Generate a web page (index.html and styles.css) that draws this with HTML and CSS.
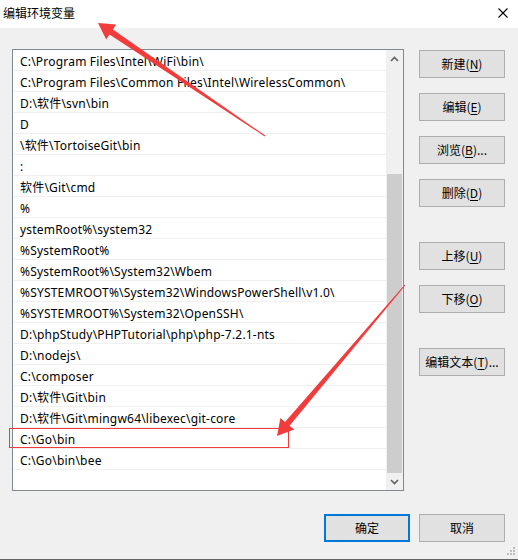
FILE: index.html
```html
<!DOCTYPE html>
<html>
<head>
<meta charset="utf-8">
<link rel="stylesheet" href="styles.css">
</head>
<body>
<div class="window">
  <div class="titlebar">
    <span class="title">编辑环境变量</span>
    <svg class="close" width="10" height="10" viewBox="0 0 10 10"><path d="M0.5 0.5 L9.5 9.5 M9.5 0.5 L0.5 9.5" stroke="#000" stroke-width="1.1" fill="none"/></svg>
  </div>
  <div class="content">
    <div class="top">
      <div class="listbox">
        <div class="rows">
          <div class="row">C:\Program Files\Intel\WiFi\bin\</div>
          <div class="row">C:\Program Files\Common Files\Intel\WirelessCommon\</div>
          <div class="row">D:\软件\svn\bin</div>
          <div class="row">D</div>
          <div class="row">\软件\TortoiseGit\bin</div>
          <div class="row">:</div>
          <div class="row">软件\Git\cmd</div>
          <div class="row">%</div>
          <div class="row">ystemRoot%\system32</div>
          <div class="row">%SystemRoot%</div>
          <div class="row">%SystemRoot%\System32\Wbem</div>
          <div class="row">%SYSTEMROOT%\System32\WindowsPowerShell\v1.0\</div>
          <div class="row">%SYSTEMROOT%\System32\OpenSSH\</div>
          <div class="row">D:\phpStudy\PHPTutorial\php\php-7.2.1-nts</div>
          <div class="row">D:\nodejs\</div>
          <div class="row">C:\composer</div>
          <div class="row">D:\软件\Git\bin</div>
          <div class="row">D:\软件\Git\mingw64\libexec\git-core</div>
          <div class="row">C:\Go\bin</div>
          <div class="row">C:\Go\bin\bee</div>
        </div>
        <div class="scrollbar">
          <div class="sb-btn"><svg width="9" height="6" viewBox="0 0 9 6"><path d="M1 5 L4.5 1.5 L8 5" stroke="#606060" stroke-width="1.6" fill="none"/></svg></div>
          <div class="track"><div class="thumb"></div></div>
          <div class="sb-btn"><svg width="9" height="6" viewBox="0 0 9 6"><path d="M1 1 L4.5 4.5 L8 1" stroke="#606060" stroke-width="1.6" fill="none"/></svg></div>
        </div>
      </div>
      <div class="side">
        <div class="btn">新建(<u>N</u>)</div>
        <div class="btn">编辑(<u>E</u>)</div>
        <div class="btn">浏览(<u>B</u>)...</div>
        <div class="btn">删除(<u>D</u>)</div>
        <div class="btn sep">上移(<u>U</u>)</div>
        <div class="btn">下移(<u>O</u>)</div>
        <div class="btn sep">编辑文本(<u>T</u>)...</div>
      </div>
    </div>
    <div class="bottom">
      <div class="btn default">确定</div>
      <div class="btn">取消</div>
    </div>
    <svg class="grip" width="9" height="9" viewBox="0 0 9 9">
      <rect x="6" y="0" width="2" height="2" fill="#bdbdbd"/>
      <rect x="3" y="3" width="2" height="2" fill="#bdbdbd"/>
      <rect x="6" y="3" width="2" height="2" fill="#bdbdbd"/>
      <rect x="0" y="6" width="2" height="2" fill="#bdbdbd"/>
      <rect x="3" y="6" width="2" height="2" fill="#bdbdbd"/>
      <rect x="6" y="6" width="2" height="2" fill="#bdbdbd"/>
    </svg>
  </div>
  <svg class="annot" width="518" height="560" viewBox="0 0 518 560">
    <rect x="9.5" y="428.5" width="279" height="19" fill="none" stroke="#f23c3c" stroke-width="1"/>
    <polygon fill="#f23c3c" points="98,23 116.2,24.5 112.9,29.5 265.3,135.6 264.7,136.4 109.5,34.5 106.2,39.5"/>
    <polygon fill="#f23c3c" points="277,436 280.4,418 285,421.9 404.6,284.7 405.4,285.3 289.6,425.7 294.2,429.6"/>
  </svg>
</div>
</body>
</html>
```
FILE: styles.css
```css
html, body {
  margin: 0;
  padding: 0;
}
body {
  font-family: "Noto Sans", "Noto Sans CJK SC", sans-serif;
  font-size: 12px;
  color: #000;
  background: #f0f0f0;
}
.window {
  position: relative;
  width: 518px;
  height: 560px;
  display: flex;
  flex-direction: column;
  box-sizing: border-box;
  border-bottom: 1px solid #646464;
  overflow: hidden;
}
.titlebar {
  height: 28px;
  background: #fff;
  display: flex;
  align-items: center;
  justify-content: space-between;
  padding: 0 10px 4px 3px;
  box-sizing: border-box;
  flex: none;
}
.title {
  font-family: "Noto Sans CJK SC", sans-serif;
  font-size: 12px;
}
.close {
  display: block;
  margin-top: 2px;
}
.content {
  flex: 1;
  position: relative;
  background: #f0f0f0;
}
.top {
  display: flex;
  padding: 21px 0 0 12px;
  gap: 15px;
}
.listbox {
  width: 392px;
  height: 442px;
  box-sizing: border-box;
  border: 1px solid #828790;
  background: #fff;
  display: flex;
}
.rows {
  flex: 1;
}
.row {
  height: 21px;
  line-height: 19px;
  box-sizing: border-box;
  border-bottom: 1px solid #f0f0f0;
  padding: 2px 0 0 7px;
  white-space: nowrap;
  overflow: hidden;
  letter-spacing: 0.2px;
}
.scrollbar {
  width: 17px;
  background: #f0f0f0;
  display: flex;
  flex-direction: column;
}
.sb-btn {
  height: 17px;
  display: flex;
  align-items: center;
  justify-content: center;
  flex: none;
}
.sb-btn svg {
  display: block;
}
.track {
  flex: 1;
  display: flex;
  flex-direction: column;
  justify-content: flex-end;
}
.thumb {
  height: 299px;
  margin: 0 1px;
  background: #cdcdcd;
}
.side {
  display: flex;
  flex-direction: column;
  gap: 15px;
  padding-top: 1px;
}
.btn {
  width: 86px;
  height: 28px;
  box-sizing: border-box;
  border: 1px solid #adadad;
  background: #e1e1e1;
  display: flex;
  align-items: center;
  justify-content: center;
  padding-bottom: 2px;
  font-family: "Noto Sans CJK SC", sans-serif;
  font-size: 12px;
  white-space: nowrap;
}
.btn u {
  text-decoration-thickness: 1px;
  text-underline-offset: 2px;
}
.side .sep {
  margin-top: 20px;
}
.btn.default {
  border: 2px solid #0078d7;
}
.bottom {
  display: flex;
  justify-content: flex-end;
  gap: 9px;
  padding: 23px 13px 0 0;
}
.grip {
  position: absolute;
  right: 2px;
  bottom: 3px;
}
.annot {
  position: absolute;
  left: 0;
  top: 0;
  pointer-events: none;
}
```
